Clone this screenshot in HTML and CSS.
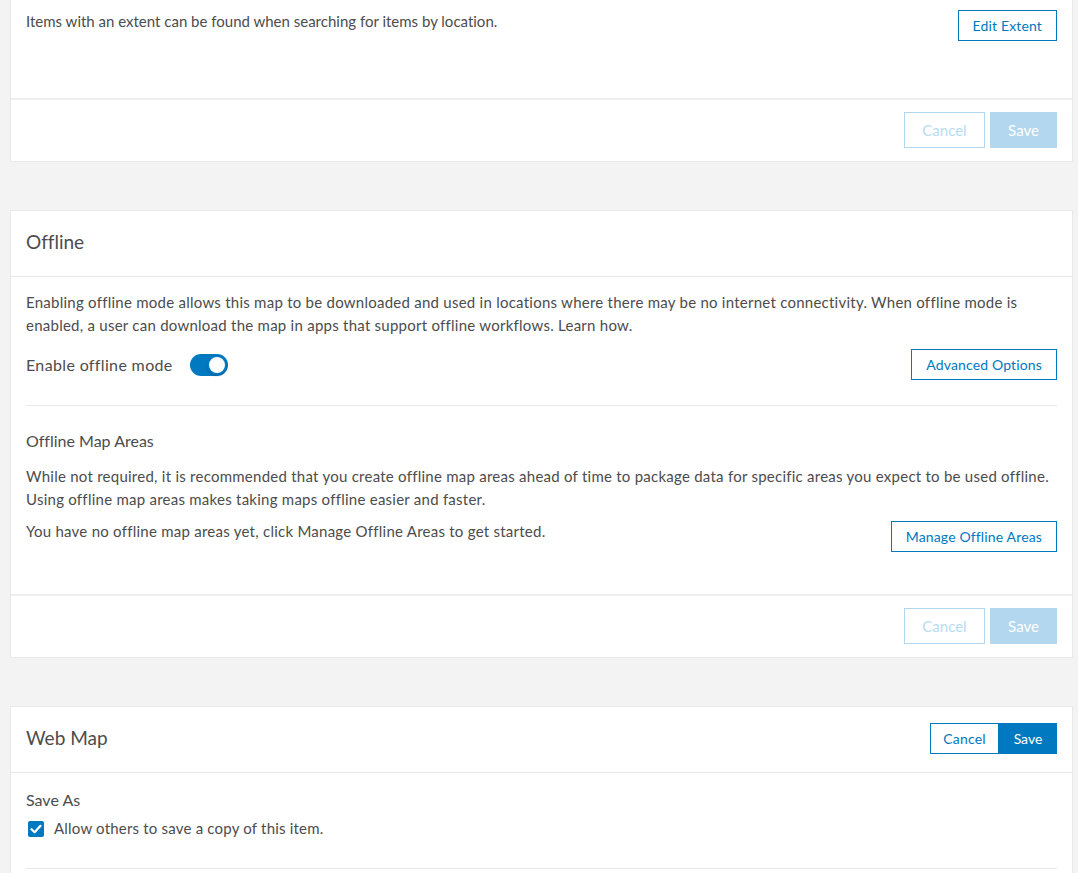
FILE: index.html
```html
<!DOCTYPE html>
<html lang="en">
<head>
<meta charset="utf-8">
<title>Settings</title>
<link rel="stylesheet" href="styles.css">
</head>
<body>
<div class="page">
  <section class="card">
    <div class="card-body first-body">
      <div class="row top">
        <p class="text lead">Items with an extent can be found when searching for items by location.</p>
        <button class="btn btn-outline">Edit Extent</button>
      </div>
    </div>
    <div class="card-footer">
      <button class="btn btn-lg btn-disabled-outline">Cancel</button>
      <button class="btn btn-lg btn-disabled">Save</button>
    </div>
  </section>

  <section class="card">
    <header class="card-header">
      <h2 class="card-title">Offline</h2>
    </header>
    <div class="card-body offline-body">
      <p class="text">Enabling offline mode allows this map to be downloaded and used in locations where there may be no internet connectivity. When offline mode is enabled, a user can download the map in apps that support offline workflows. Learn how.</p>
      <div class="row center toggle-row">
        <label class="toggle-label">
          <span class="toggle-text">Enable offline mode</span>
          <span class="switch"><span class="knob"></span></span>
        </label>
        <button class="btn btn-outline">Advanced Options</button>
      </div>
      <div class="divider"></div>
      <h3 class="sub-title">Offline Map Areas</h3>
      <p class="text">While not required, it is recommended that you create offline map areas ahead of time to package data for specific areas you expect to be used offline. Using offline map areas makes taking maps offline easier and faster.</p>
      <div class="row top manage-row">
        <p class="text">You have no offline map areas yet, click Manage Offline Areas to get started.</p>
        <button class="btn btn-outline">Manage Offline Areas</button>
      </div>
    </div>
    <div class="card-footer">
      <button class="btn btn-lg btn-disabled-outline">Cancel</button>
      <button class="btn btn-lg btn-disabled">Save</button>
    </div>
  </section>

  <section class="card">
    <header class="card-header row center">
      <h2 class="card-title">Web Map</h2>
      <div class="btn-group">
        <button class="btn btn-outline group-cancel">Cancel</button>
        <button class="btn btn-solid">Save</button>
      </div>
    </header>
    <div class="card-body webmap-body">
      <h3 class="sub-title">Save As</h3>
      <label class="check-row">
        <span class="checkbox">
          <svg width="12" height="10" viewBox="0 0 12 10"><path d="M1.5 5.2 L4.6 8.2 L10.5 1.8" fill="none" stroke="#fff" stroke-width="2.2" stroke-linecap="round" stroke-linejoin="round"/></svg>
        </span>
        <span class="text">Allow others to save a copy of this item.</span>
      </label>
      <div class="divider"></div>
    </div>
  </section>
</div>
</body>
</html>
```

FILE: styles.css
```css
* { box-sizing: border-box; }
html, body { margin: 0; padding: 0; }
body {
  background: #f3f3f3;
  font-family: "Lato", "Liberation Sans", sans-serif;
  font-variant-ligatures: none;
  color: #4c4c4c;
  font-size: 15px;
}
.page {
  padding: 0 5px 0 10px;
  display: flex;
  flex-direction: column;
  gap: 48px;
}
.card {
  background: #fff;
  border: 1px solid #e9e9e9;
}
.page > .card:first-child { border-top: none; }
.text { margin: 0; line-height: 22px; }
.row { display: flex; justify-content: space-between; gap: 20px; }
.row.top { align-items: flex-start; }
.row.center { align-items: center; }

.card-body { padding: 0 15px 0 15px; }
.card-body.first-body { padding-top: 10px; height: 100px; border-bottom: 2px solid #ededed; }
.first-body .lead { margin-top: 0; }

.card-header {
  height: 66px;
  padding: 0 15px 2px 15px;
  display: flex;
  align-items: center;
  border-bottom: 1px solid #e8e8e8;
}
.card-title { margin: 0 0 2px; font-size: 19px; font-weight: 400; color: #4c4c4c; line-height: 24px; }
.sub-title { margin: 0; font-size: 16px; font-weight: 400; color: #4c4c4c; line-height: 22px; }

.card-body.offline-body { padding-top: 14px; padding-bottom: 42px; border-bottom: 2px solid #ededed; }
.offline-body .text { line-height: 23px; letter-spacing: 0.25px; }
.toggle-row { margin-top: 12px; }
.toggle-label { display: flex; align-items: center; gap: 17px; }
.toggle-text { font-size: 16px; line-height: 22px; letter-spacing: 0.35px; }
.switch {
  width: 38px; height: 22px; border-radius: 11px;
  background: #0079c1; position: relative; display: inline-block;
}
.knob {
  position: absolute; right: 1px; top: 1px;
  width: 20px; height: 20px; border-radius: 50%;
  background: #fff; border: 2px solid #0079c1;
  box-shadow: 0 1px 2px rgba(0,0,0,0.25);
}
.divider { height: 1px; background: #e8e8e8; margin: 25px 0 24px; }
.offline-body .sub-title { margin-bottom: 13px; }
.manage-row { margin-top: 10px; }
.manage-row .text { margin-top: -1px; }

.card-footer {
  display: flex; justify-content: flex-end; gap: 5px;
  padding: 12px 15px 13px 16px;
}

.btn {
  font-family: inherit; font-size: 14px; line-height: 1;
  font-variant-ligatures: none;
  background: #fff; cursor: pointer; height: 31px; padding: 0 14px;
  border: 1px solid #0079c1; color: #0079c1;
}
.btn-outline { letter-spacing: 0.15px; }
.btn-lg { height: 36px; font-size: 15px; }
.btn-disabled-outline { width: 81px; border-color: #b3d7ee; color: #b9dcf0; }
.btn-disabled { width: 67px; background: #b3d7ee; border-color: #b3d7ee; color: #fff; }
.btn-group { display: flex; }
.group-cancel { width: 69px; padding: 0; }
.btn-solid { background: #0079c1; color: #fff; width: 58px; padding: 0; }

.card-body.webmap-body { padding-top: 16px; }
.check-row { display: flex; align-items: center; gap: 10px; margin-top: 6px; padding-left: 2px; }
.check-row .text { letter-spacing: 0.2px; line-height: 23px; }
.checkbox {
  width: 16px; height: 16px; border-radius: 2px; background: #0079c1;
  display: inline-flex; align-items: center; justify-content: center;
}
.webmap-body .divider { margin-top: 28px; }
```
